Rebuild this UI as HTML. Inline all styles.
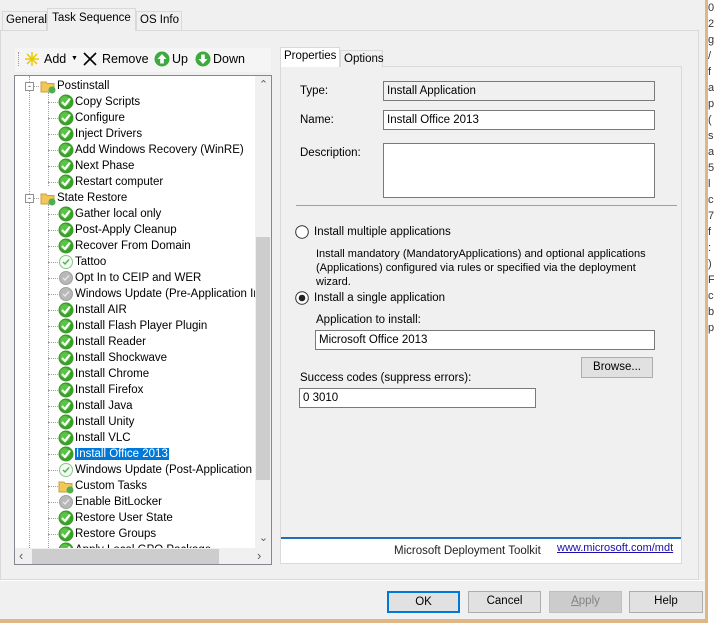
<!DOCTYPE html>
<html><head><meta charset="utf-8"><style>
*{box-sizing:border-box;margin:0;padding:0}
body{width:714px;height:623px;overflow:hidden;background:#f0f0f0;font-family:"Liberation Sans",sans-serif;font-size:11.5px;color:#000;position:relative}
.a{position:absolute;white-space:nowrap}
.tab{position:absolute;border:1px solid #d9d9d9;border-bottom:none;background:#f0f0f0;padding:2px 3px;font-size:11.5px;white-space:nowrap;text-align:center}
.box{position:absolute;border:1px solid #7a7a7a;background:#fff;padding:2px 3px;font-size:11.5px;line-height:14px;white-space:nowrap}
.btn{position:absolute;border:1px solid #adadad;background:#e1e1e1;text-align:center;line-height:19px;font-size:11.5px}
.row{position:absolute;height:16px;line-height:16px;white-space:nowrap;font-size:11.5px}
.row svg{position:absolute;top:0}
.dotv{position:absolute;border-left:1px dotted #a0a0a0}
.doth{position:absolute;border-top:1px dotted #a0a0a0;width:10px}
</style></head><body>
<div class="a" style="left:705px;top:0;width:3px;height:623px;background:#e0b684"></div>
<div class="a" style="left:708px;top:0;width:6px;height:623px;background:#fff;overflow:hidden;font-size:11px;line-height:16px;color:#333">0<br>2<br>g<br>/<br>f<br>a<br>p<br>(<br>s<br>a<br>5<br>l<br>c<br>7<br>f<br>:<br>)<br>F<br>c<br>b<br>p</div>
<div class="a" style="left:0;top:619px;width:706px;height:4px;background:#e0b684"></div>

<div class="a" style="left:0;top:30px;width:699px;height:550px;border:1px solid #d9d9d9;background:#f0f0f0"></div>
<div class="tab" style="left:2px;top:11px;width:45px;height:19px">General</div>
<div class="tab" style="left:47px;top:8px;width:89px;height:23px;padding-top:3px">Task Sequence</div>
<div class="tab" style="left:136px;top:11px;width:46px;height:19px">OS Info</div>
<div class="a" style="left:0;top:580px;width:705px;height:1px;background:#fff"></div>

<div class="a" style="left:15px;top:48px;width:256px;height:24px;background:#f5f5f5"></div>
<div class="a" style="left:18px;top:52px;height:14px;border-left:1px dotted #999"></div>
<svg class="a" style="left:24px;top:51px" width="16" height="16"><g stroke="#e8c800" stroke-width="1.5"><line x1="8" y1="1" x2="8" y2="15"/><line x1="1" y1="8" x2="15" y2="8"/><line x1="3" y1="3" x2="13" y2="13"/><line x1="13" y1="3" x2="3" y2="13"/></g></svg>
<div class="a" style="left:44px;top:52px;font-size:12.5px">Add</div>
<div class="a" style="left:71px;top:55px;font-size:7px">▼</div>
<svg class="a" style="left:83px;top:52px" width="14" height="14"><g stroke="#000" stroke-width="1.6"><line x1="1" y1="1" x2="13" y2="13"/><line x1="13" y1="1" x2="1" y2="13"/></g></svg>
<div class="a" style="left:102px;top:52px;font-size:12.5px">Remove</div>
<svg class="a" style="left:154px;top:51px" width="16" height="16"><circle cx="8" cy="8" r="7.5" fill="#3daa3d"/><path d="M8 3 L12.5 8 H9.8 V12.5 H6.2 V8 H3.5Z" fill="#fff"/></svg>
<div class="a" style="left:172px;top:52px;font-size:12.5px">Up</div>
<svg class="a" style="left:195px;top:51px" width="16" height="16"><circle cx="8" cy="8" r="7.5" fill="#3daa3d"/><path d="M8 13 L12.5 8 H9.8 V3.5 H6.2 V8 H3.5Z" fill="#fff"/></svg>
<div class="a" style="left:213px;top:52px;font-size:12.5px">Down</div>

<div class="a" style="left:14px;top:75px;width:258px;height:490px;border:1px solid #828790;background:#fff;overflow:hidden">
 <div class="a" id="tree" style="left:0;top:0;width:240px;height:472px;overflow:hidden"></div>
 <div class="a" style="left:240px;top:0;width:17px;height:472px;background:#f0f0f0"></div>
 <div class="a" style="left:241px;top:2px;font-size:11px;color:#606060;width:15px;text-align:center">&#8963;</div>
 <div class="a" style="left:241px;top:161px;width:14px;height:243px;background:#cdcdcd"></div>
 <div class="a" style="left:241px;top:455px;font-size:11px;color:#606060;width:15px;text-align:center">&#8964;</div>
 <div class="a" style="left:0;top:472px;width:257px;height:17px;background:#f0f0f0"></div>
 <div class="a" style="left:17px;top:473px;width:187px;height:15px;background:#cdcdcd"></div>
 <div class="a" style="left:4px;top:472px;font-size:13px;color:#606060">&#8249;</div>
 <div class="a" style="left:242px;top:472px;font-size:13px;color:#606060">&#8250;</div>
</div>

<div class="a" style="left:280px;top:66px;width:402px;height:498px;border:1px solid #d9d9d9;background:#f0f0f0"></div>
<div class="tab" style="left:280px;top:47px;width:60px;height:20px;background:#fff">Properties</div>
<div class="tab" style="left:340px;top:50px;width:43px;height:17px;padding-top:2px">Options</div>
<div class="a" style="left:281px;top:537px;width:400px;height:26px;background:#fff;border-top:2px solid #1f6fb4"></div>
<div class="a" style="left:394px;top:545px;color:#222">Microsoft Deployment Toolkit</div>
<div class="a" style="left:557px;top:542px;font-size:11px;color:#1a0dab;text-decoration:underline">www.microsoft.com/mdt</div>

<div class="a" style="left:300px;top:85px">Type:</div>
<div class="box" style="left:383px;top:81px;width:272px;height:20px;background:#f0f0f0">Install Application</div>
<div class="a" style="left:300px;top:114px">Name:</div>
<div class="box" style="left:383px;top:110px;width:272px;height:20px">Install Office 2013</div>
<div class="a" style="left:300px;top:147px">Description:</div>
<div class="box" style="left:383px;top:143px;width:272px;height:55px"></div>
<div class="a" style="left:296px;top:205px;width:381px;height:1px;background:#a0a0a0"></div>

<svg class="a" style="left:295px;top:225px" width="14" height="14"><circle cx="7" cy="7" r="6.3" fill="#fff" stroke="#333"/></svg>
<div class="a" style="left:314px;top:226px">Install multiple applications</div>
<div class="a" style="left:316px;top:247px;line-height:14px;font-size:11px">Install mandatory (MandatoryApplications) and optional applications<br>(Applications) configured via rules or specified via the deployment<br>wizard.</div>
<svg class="a" style="left:295px;top:291px" width="14" height="14"><circle cx="7" cy="7" r="6.3" fill="#fff" stroke="#333"/><circle cx="7" cy="7" r="3.3" fill="#222"/></svg>
<div class="a" style="left:314px;top:292px">Install a single application</div>
<div class="a" style="left:316px;top:314px">Application to install:</div>
<div class="box" style="left:315px;top:330px;width:340px;height:20px">Microsoft Office 2013</div>
<div class="btn" style="left:581px;top:357px;width:72px;height:21px">Browse...</div>
<div class="a" style="left:300px;top:372px">Success codes (suppress errors):</div>
<div class="box" style="left:299px;top:388px;width:237px;height:20px">0 3010</div>

<div class="btn" style="left:387px;top:591px;width:73px;height:22px;border:2px solid #0078d7;line-height:18px">OK</div>
<div class="btn" style="left:468px;top:591px;width:73px;height:22px">Cancel</div>
<div class="btn" style="left:549px;top:591px;width:73px;height:22px;background:#cccccc;border-color:#bfbfbf;color:#838383"><u>A</u>pply</div>
<div class="btn" style="left:629px;top:591px;width:74px;height:22px">Help</div>

<script>
var rows=[["f","Postinstall"],["g","Copy Scripts"],["g","Configure"],["g","Inject Drivers"],["g","Add Windows Recovery (WinRE)"],["g","Next Phase"],["g","Restart computer"],["f","State Restore"],["g","Gather local only"],["g","Post-Apply Cleanup"],["g","Recover From Domain"],["l","Tattoo"],["d","Opt In to CEIP and WER"],["d","Windows Update (Pre-Application Inst"],["g","Install AIR"],["g","Install Flash Player Plugin"],["g","Install Reader"],["g","Install Shockwave"],["g","Install Chrome"],["g","Install Firefox"],["g","Install Java"],["g","Install Unity"],["g","Install VLC"],["s","Install Office 2013"],["l","Windows Update (Post-Application Ins"],["c","Custom Tasks"],["d","Enable BitLocker"],["g","Restore User State"],["g","Restore Groups"],["g","Apply Local GPO Package"]];
var h='<div class="dotv" style="left:14px;top:0;height:472px"></div>';
var green='<circle cx="8" cy="8" r="7.5" fill="#3a9e2a"/><circle cx="7" cy="7" r="5" fill="#5cc24a"/><path d="M4 8 L7 11 L12 4.5" stroke="#fff" stroke-width="2.2" fill="none"/>';
var light='<circle cx="8" cy="8" r="6.5" fill="#f4fbf4" stroke="#8ac48a"/><path d="M5 8 L7 10 L11 5.5" stroke="#4caf50" stroke-width="1.4" fill="none"/>';
var gray='<circle cx="8" cy="8" r="6.5" fill="#b8b8b8" stroke="#a0a0a0"/><path d="M5 8 L7 10 L11 5.5" stroke="#e8e8e8" stroke-width="1.4" fill="none"/>';
var folder='<path d="M1 4 H6 L7 5.5 H14 V14 H1Z" fill="#f0c85a" stroke="#c9a040"/><circle cx="12" cy="12" r="3.5" fill="#4caf50"/>';
rows.forEach(function(r,i){
 var y=2+i*16;var t=r[0];
 if(t=="f"){
  h+='<div class="a" style="left:10px;top:'+(y+4)+'px;width:9px;height:9px;border:1px solid #919191;background:#fff;font-size:9px;line-height:6px;text-align:center;color:#333">-</div>';
  h+='<div class="doth" style="left:19px;top:'+(y+8)+'px;width:5px"></div>';
  h+='<div class="row" style="left:25px;top:'+y+'px"><svg width="16" height="16">'+folder+'</svg><span style="margin-left:17px">'+r[1]+'</span></div>';
 } else {
  h+='<div class="doth" style="left:33px;top:'+(y+8)+'px"></div>';
  var ic=t=="l"?light:(t=="d"?gray:(t=="c"?folder:green));
  var sel=t=="s"?'background:#0078d7;color:#fff;padding:0 1px;':'';
  h+='<div class="row" style="left:43px;top:'+y+'px"><svg width="16" height="16">'+ic+'</svg><span style="margin-left:17px;'+sel+'">'+r[1]+'</span></div>';
 }
});
h+='<div class="dotv" style="left:33px;top:16px;height:94px"></div><div class="dotv" style="left:33px;top:128px;height:344px"></div>';
document.getElementById('tree').innerHTML=h;
</script>
</body></html>
